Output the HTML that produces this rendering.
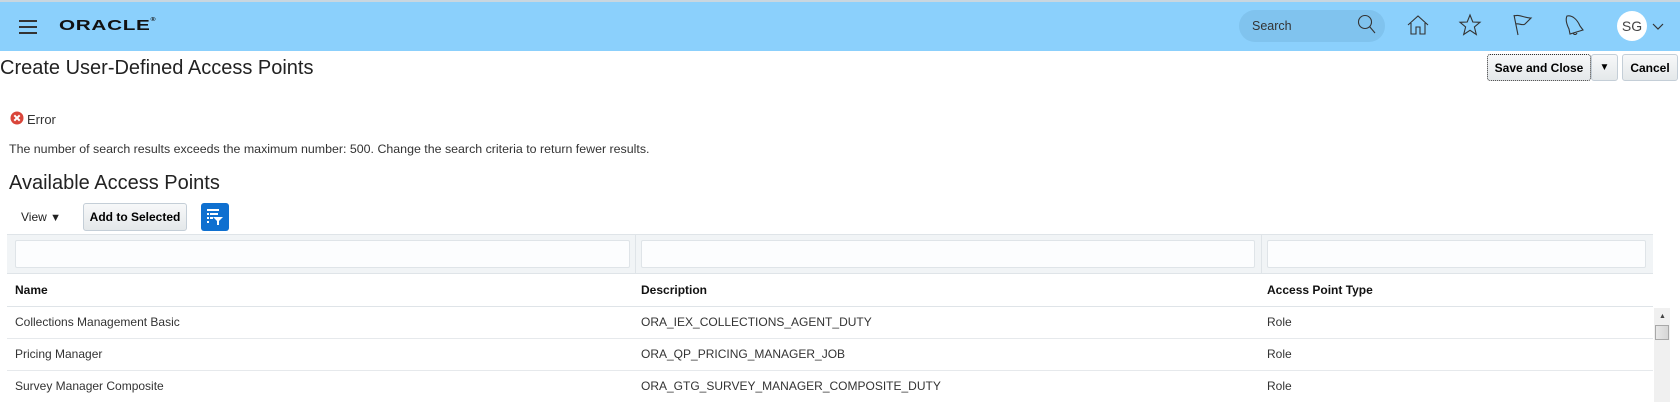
<!DOCTYPE html>
<html><head><meta charset="utf-8"><style>
*{margin:0;padding:0;box-sizing:border-box}
body{width:1680px;height:402px;overflow:hidden;background:#fff;font-family:"Liberation Sans",Arial,sans-serif;color:#333;position:relative}
.abs{position:absolute}
.hdr{left:0;top:0;width:1680px;height:51px;background:#8bd0fc;border-top:2px solid #c9d6df}
.btn{position:absolute;background:linear-gradient(#f7f8f9,#e4e8ea);border:1px solid #c4ced7;border-radius:3px;font-weight:bold;font-size:12px;color:#000;display:flex;align-items:center;justify-content:center}
.t12{font-size:12.4px;color:#333}
.inp{position:absolute;top:240px;height:28px;background:#fcfdfe;border:1px solid #dfe4e8;border-radius:2px}
.row{position:absolute;left:7px;width:1646px;border-bottom:1px solid #e6e9ec}
.cell{position:absolute;font-size:12px;color:#333}
</style></head><body>
<div class="abs hdr"></div>
<svg class="abs" style="left:19px;top:18px" width="20" height="16"><g stroke="#333" stroke-width="2"><line x1="0" y1="3" x2="18" y2="3"/><line x1="0" y1="9" x2="18" y2="9"/><line x1="0" y1="15" x2="18" y2="15"/></g></svg>
<div class="abs" style="left:59px;top:17px;font-size:15px;font-weight:bold;letter-spacing:0.5px;color:#111;transform:scaleX(1.38);transform-origin:left">ORACLE<span style="font-size:5px;vertical-align:top">®</span></div>
<div class="abs" style="left:1239px;top:10px;width:146px;height:32px;border-radius:16px;background:#80c3ee"></div>
<div class="abs" style="left:1252px;top:19px;font-size:12.5px;color:#333">Search</div>
<svg class="abs" style="left:1357px;top:14px" width="22" height="22" fill="none" stroke="#333" stroke-width="1.1"><circle cx="8" cy="8" r="6.5"/><line x1="12.5" y1="12.5" x2="18" y2="19"/></svg>
<svg class="abs" style="left:1406px;top:13px" width="24" height="24" fill="none" stroke="#333" stroke-width="1.1"><path d="M2 12 L12 3 L22 12 M5 10 V21 H10 V14 H14 V21 H19 V10"/></svg>
<svg class="abs" style="left:1458px;top:13px" width="24" height="24" fill="none" stroke="#333" stroke-width="1.1"><path d="M12 2 L14.8 9 L22 9.3 L16.4 14 L18.3 21.5 L12 17.3 L5.7 21.5 L7.6 14 L2 9.3 L9.2 9 Z"/></svg>
<svg class="abs" style="left:1510px;top:13px" width="24" height="24" fill="none" stroke="#333" stroke-width="1.1"><path d="M4 2 L8 22 M4 3 C10 1 14 5 21 5 L15 11 C13 13 9 10 5.5 11"/></svg>
<svg class="abs" style="left:1562px;top:13px" width="24" height="24" fill="none" stroke="#333" stroke-width="1.1"><path d="M5 3 C10 2 15 6 18 13 L21 17 L8 21 L7 16 C5 12 3 7 5 3 Z M11 20 C12 22 14 22 15 20"/></svg>
<div class="abs" style="left:1617px;top:11px;width:30px;height:30px;border-radius:50%;background:#fff;font-size:14px;color:#444;display:flex;align-items:center;justify-content:center">SG</div>
<svg class="abs" style="left:1652px;top:23px" width="12" height="8" fill="none" stroke="#333" stroke-width="1.2"><path d="M1 1 L6 6 L11 1"/></svg>

<div class="abs" style="left:0;top:57px;font-size:20px;color:#222">Create User-Defined Access Points</div>
<div class="btn" style="left:1487px;top:54px;width:104px;height:27px;border:1px dotted #333">Save and Close</div>
<div class="btn" style="left:1591px;top:54px;width:27px;height:27px;font-size:10px">▼</div>
<div class="btn" style="left:1622px;top:54px;width:56px;height:27px">Cancel</div>

<svg class="abs" style="left:10px;top:111px" width="14" height="14"><circle cx="7" cy="7" r="6.5" fill="#d9453a"/><path d="M4.3 4.3 L9.7 9.7 M9.7 4.3 L4.3 9.7" stroke="#fff" stroke-width="2"/></svg>
<div class="abs" style="left:27px;top:112px;font-size:13px;color:#333">Error</div>
<div class="abs t12" style="left:9px;top:142px">The number of search results exceeds the maximum number: 500. Change the search criteria to return fewer results.</div>
<div class="abs" style="left:9px;top:172px;font-size:20px;color:#222">Available Access Points</div>

<div class="abs" style="left:21px;top:210px;font-size:12px;color:#222">View <span style="font-size:11px">▼</span></div>
<div class="btn" style="left:83px;top:203px;width:104px;height:28px">Add to Selected</div>
<div class="abs" style="left:201px;top:203px;width:28px;height:28px;border-radius:3px;background:#0f70d0"></div>
<svg class="abs" style="left:206px;top:208px" width="18" height="18" fill="#fff"><rect x="1" y="1" width="12" height="2"/><rect x="1" y="5" width="2" height="2"/><rect x="4" y="5" width="8" height="2"/><rect x="1" y="9" width="2" height="2"/><rect x="4" y="9" width="3" height="2"/><rect x="1" y="13" width="2" height="2"/><path d="M7 9 L17 9 L13 13 L13 17 L11 17 L11 13 Z"/></svg>

<div class="abs" style="left:7px;top:234px;width:1646px;height:40px;background:#f1f4f6;border-top:1px solid #dfe4e8;border-bottom:1px solid #dfe4e8"></div>
<div class="abs" style="left:635px;top:234px;width:1px;height:40px;background:#dfe4e8"></div>
<div class="abs" style="left:1261px;top:234px;width:1px;height:40px;background:#dfe4e8"></div>
<div class="inp" style="left:15px;width:615px"></div>
<div class="inp" style="left:641px;width:614px"></div>
<div class="inp" style="left:1267px;width:379px"></div>

<div class="cell" style="left:15px;top:283px;font-weight:bold;color:#111">Name</div>
<div class="cell" style="left:641px;top:283px;font-weight:bold;color:#111">Description</div>
<div class="cell" style="left:1267px;top:283px;font-weight:bold;color:#111">Access Point Type</div>
<div class="abs" style="left:7px;top:306px;width:1646px;height:1px;background:#dfe4e8"></div>

<div class="row" style="top:307px;height:32px"></div>
<div class="row" style="top:339px;height:32px"></div>
<div class="cell" style="left:15px;top:315px">Collections Management Basic</div>
<div class="cell" style="left:641px;top:315px">ORA_IEX_COLLECTIONS_AGENT_DUTY</div>
<div class="cell" style="left:1267px;top:315px">Role</div>
<div class="cell" style="left:15px;top:347px">Pricing Manager</div>
<div class="cell" style="left:641px;top:347px">ORA_QP_PRICING_MANAGER_JOB</div>
<div class="cell" style="left:1267px;top:347px">Role</div>
<div class="cell" style="left:15px;top:379px">Survey Manager Composite</div>
<div class="cell" style="left:641px;top:379px">ORA_GTG_SURVEY_MANAGER_COMPOSITE_DUTY</div>
<div class="cell" style="left:1267px;top:379px">Role</div>

<div class="abs" style="left:1654px;top:308px;width:16px;height:94px;background:#f0f0f0"></div>
<div class="abs" style="left:1659px;top:313px;font-size:7px;color:#444">▲</div>
<div class="abs" style="left:1655px;top:325px;width:14px;height:15px;background:linear-gradient(90deg,#e8e8e8,#d6d6d6);border:1px solid #a8a8a8"></div>
</body></html>
